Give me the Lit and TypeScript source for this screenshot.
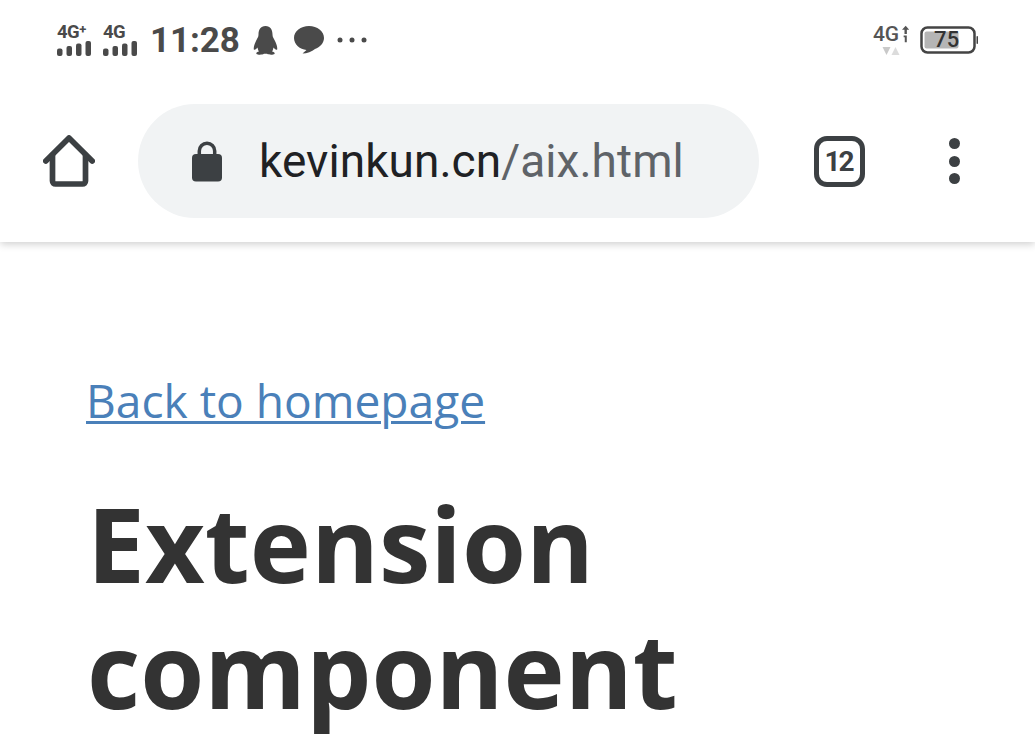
import { LitElement, html, css } from "lit";
import { customElement } from "lit/decorators.js";

@customElement("app-root")
export class AppRoot extends LitElement {
  static styles = css`
    :host { display: block; width: 1035px; height: 750px; overflow: hidden; background: #fff; font-family: Roboto, "Liberation Sans", sans-serif; }
    .status { height: 80px; display: flex; align-items: center; padding: 0 57px 0 57px; color: #4a4a4a; box-sizing: border-box; background: #fff; position: relative; z-index: 1; }
    .sig { display: flex; flex-direction: column; width: 34px; margin-right: 12px; height: 32px; margin-top: 0; }
    .sig span { font-size: 18.5px; font-weight: 700; line-height: 17px; letter-spacing: -0.5px; white-space: nowrap; }
    .sig sup { font-size: 13px; line-height: 0; vertical-align: 4px; }
    .sig svg { display: block; margin-top: 0; }
    .time { font-size: 35px; font-weight: 700; letter-spacing: -0.1px; margin: 2px 13px 0 1px; line-height: 40px; }
    .penguin { margin-right: 16px; }
    .bubble { margin-right: 13px; }
    .spacer { flex: 1; }
    .net { width: 36px; height: 36px; margin-right: 11px; margin-top: 0; }
    .net b { font-size: 21px; font-weight: 500; line-height: 24px; letter-spacing: -0.3px; color: #555; }
    .net-top { display: flex; align-items: center; gap: 3px; height: 24px; }
    .net svg { display: block; }
    .batt { width: 58px; height: 28px; display: block; }
    .battery-wrap { position: relative; width: 58px; height: 28px; margin-left: 0; }
    .batt-num { position: absolute; left: 14px; top: 1px; font-size: 22px; line-height: 26px; font-weight: 500; color: #333; letter-spacing: 0.3px; }
    .toolbar { height: 162px; display: flex; align-items: center; padding-left: 43px; box-sizing: border-box; background: #fff; box-shadow: 0 2px 8px rgba(0,0,0,.2); position: relative; }
    .home { width: 52px; height: 52px; margin-right: 43px; flex: none; }
    .pill { width: 621px; height: 114px; border-radius: 57px; background: #f1f3f4; display: flex; align-items: center; padding-left: 54px; box-sizing: border-box; flex: none; }
    .lock { width: 30px; height: 41px; margin-right: 37px; flex: none; }
    .url { font-size: 46px; line-height: 54px; color: #202124; letter-spacing: 0.06px; }
    .url span { color: #5f6368; }
    .tab { width: 51px; height: 51px; margin-left: 55px; padding-right: 2px; box-sizing: border-box; border: 5px solid #3c4043; border-radius: 13px; display: flex; align-items: center; justify-content: center; font-size: 28px; font-weight: 700; letter-spacing: -2px; color: #3c4043; flex: none; }
    .dots { margin-left: 84px; display: flex; flex-direction: column; gap: 6.5px; flex: none; }
    .dots i { width: 11px; height: 11px; border-radius: 50%; background: #3c4043; display: block; }
    .content { padding: 126px 0 0 86px; font-family: "Open Sans", sans-serif; color: #333; }
    a { display: block; width: max-content; font-size: 46.1px; line-height: 66px; color: #4a80b9; text-decoration: underline; text-decoration-thickness: 3px; text-underline-offset: 3px; }
    h1 { margin: 46px 0 0 1px; font-size: 103.5px; font-weight: 700; line-height: 126px; width: 800px; }
  `;

  private bars() {
    return html`<svg width="34" height="15" viewBox="0 0 34 15" fill="#4a4a4a">
      <rect x="0" y="7.500" width="5.500" height="7.500" rx="2"/><rect x="9.500" y="5" width="5.500" height="10" rx="2"/>
      <rect x="19" y="2.500" width="5.500" height="12.500" rx="2"/><rect x="28.500" y="0" width="5.500" height="15" rx="2"/>
    </svg>`;
  }

  render() {
    return html`
      <div class="status">
        <div class="sig"><span>4G<sup>+</sup></span>${this.bars()}</div>
        <div class="sig"><span>4G</span>${this.bars()}</div>
        <div class="time">11:28</div>
        <svg class="penguin" width="25" height="29" viewBox="0 0 25 29" fill="#4a4a4a">
          <path d="M12.500 0C7.500 0 5.500 4 5.500 8.500C5.500 11 4.500 12 3 15C1.500 18 .5 21 .8 23.500C2 24.500 3.500 22.500 4.500 21.500C5 24 5.500 25 6 25.500C4 26 2.800 26.800 3.500 28C5 29 9 29 11 27.800L14 27.800C16 29 20 29 21.500 28C22.200 26.800 21 26 19 25.500C19.500 25 20 24 20.500 21.500C21.500 22.500 23 24.500 24.200 23.500C24.500 21 23.500 18 22 15C20.500 12 19.500 11 19.500 8.500C19.500 4 17.500 0 12.500 0Z"/>
        </svg>
        <svg class="bubble" width="30" height="28" viewBox="0 0 30 28" fill="#4a4a4a">
          <path d="M15 0C6.700 0 0 5 0 12C0 18.500 6 23.500 12.500 24L8.500 27.500C13 27.500 18 25.500 21 23C26 21 30 17 30 12C30 5 23.300 0 15 0Z"/>
        </svg>
        <svg width="30" height="6" viewBox="0 0 30 6" fill="#4a4a4a"><circle cx="3" cy="3" r="2.500"/><circle cx="15" cy="3" r="2.500"/><circle cx="27" cy="3" r="2.500"/></svg>
        <div class="spacer"></div>
        <div class="net">
          <div class="net-top">
            <b>4G</b>
            <svg width="8" height="18" viewBox="0 0 8 18" fill="#555"><path d="M4 0L8 4.500H5.300V9H2.700V4.500H0Z"/><path d="M1.800 10.500H5.200V18H3V12.500H1.800Z"/></svg>
          </div>
          <svg width="36" height="10" viewBox="0 0 36 10"><path d="M9.500 1h8l-4 8z" fill="#c9c9c9"/><path d="M18.500 9h8l-4-8z" fill="#dcdcdc"/></svg>
        </div>
        <div class="battery-wrap">
          <svg class="batt" viewBox="0 0 58 28">
            <rect x="1.500" y="1.500" width="53" height="25" rx="6" fill="#fff" stroke="#444" stroke-width="2.500"/>
            <rect x="4.500" y="5.500" width="34" height="17" rx="2" fill="#b5b5b5"/>
            <rect x="56.500" y="10" width="1.500" height="8" rx=".75" fill="#444"/>
          </svg>
          <span class="batt-num">75</span>
        </div>
      </div>
      <div class="toolbar">
        <svg class="home" viewBox="0 0 52 52" fill="none" stroke="#3c4043" stroke-width="5.700" stroke-linejoin="round" stroke-linecap="round">
          <path d="M2.800 26L26 3L49.200 26"/>
          <path d="M9.500 20V46a3 3 0 0 0 3 3H39.500a3 3 0 0 0 3-3V20"/>
        </svg>
        <div class="pill">
          <svg class="lock" viewBox="0 0 30 41">
            <path d="M7.300 15V10a7.700 7.700 0 0 1 15.400 0V15" fill="none" stroke="#3c4043" stroke-width="3.500"/>
            <rect x="0" y="13" width="30" height="27.500" rx="4" fill="#3c4043"/>
          </svg>
          <div class="url">kevinkun.cn<span>/aix.html</span></div>
        </div>
        <div class="tab">12</div>
        <div class="dots"><i></i><i></i><i></i></div>
      </div>
      <div class="content">
        <a href="#">Back to homepage</a>
        <h1>Extension component</h1>
      </div>
    `;
  }
}
